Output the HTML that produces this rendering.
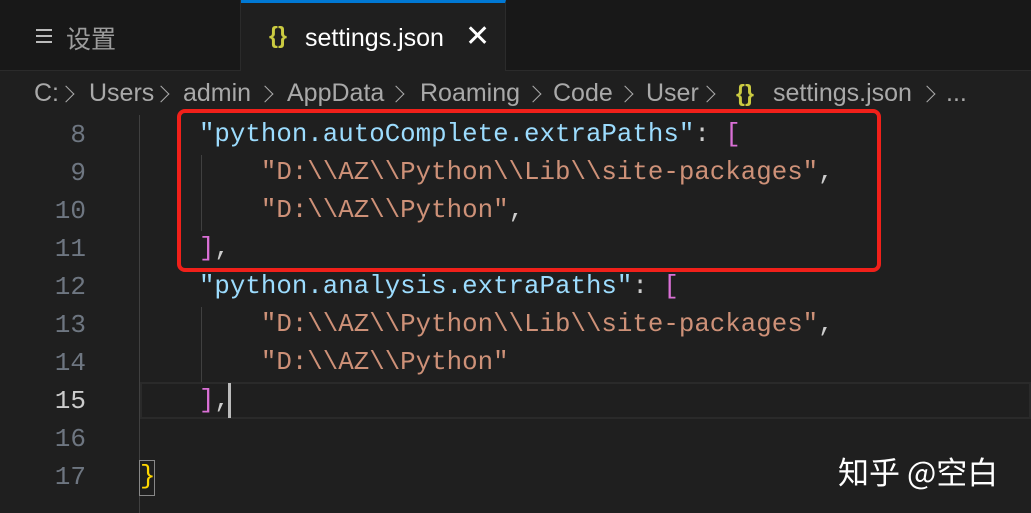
<!DOCTYPE html>
<html><head><meta charset="utf-8"><style>
*{margin:0;padding:0;box-sizing:border-box}
body{width:1031px;height:513px;background:#1f1f1f;overflow:hidden;position:relative;font-family:"Liberation Sans","Noto Sans CJK SC",sans-serif}
.tabs{position:absolute;left:0;top:0;width:1031px;height:71px;background:#181818;border-bottom:1px solid #2b2b2b}
.tab1{position:absolute;left:0;top:0;width:241px;height:70px;border-right:1px solid #2b2b2b;color:#9d9d9d;font-size:25px}
.tab2{position:absolute;left:241px;top:0;width:265px;height:71px;background:#1f1f1f;border-top:3px solid #0078d4;border-right:1px solid #2b2b2b;color:#fff;font-size:25px}
.cw{position:absolute;top:79px;color:#a9a9a9;font-size:25px;white-space:nowrap}
.ch{position:absolute;top:88px;width:12px;height:12px;border-top:1.5px solid #a9a9a9;border-right:1.5px solid #a9a9a9;transform:rotate(45deg)}
.ln{position:absolute;left:0;width:86px;text-align:right;color:#6e7681;font-family:"Liberation Mono",monospace;font-size:26px}
.code{position:absolute;left:137px;font-family:"Liberation Mono",monospace;font-size:25.8px;white-space:pre;color:#ccc}
.k{color:#9cdcfe}.s{color:#ce9178}.p{color:#da70d6}.y{color:#ffd700}
</style></head><body>
<div class="tabs">
 <div class="tab1"><span style="position:absolute;left:36px;top:29px;width:16px;height:2px;background:#bbb;box-shadow:0 6px 0 #bbb,0 12px 0 #bbb"></span><span style="position:absolute;left:66px;top:20px">设置</span></div>
 <div class="tab2"><span style="position:absolute;left:28px;top:19px;color:#cbcb41;font-weight:bold;font-size:23px">{}</span><span style="position:absolute;left:64px;top:21px">settings.json</span><span style="position:absolute;left:224px;top:16px;font-size:30px">✕</span></div>
</div>
<span class="cw" style="left:34px">C:</span><span class="ch" style="left:60px"></span>
<span class="cw" style="left:89px">Users</span><span class="ch" style="left:155px"></span>
<span class="cw" style="left:183px">admin</span><span class="ch" style="left:259px"></span>
<span class="cw" style="left:287px">AppData</span><span class="ch" style="left:390px"></span>
<span class="cw" style="left:420px">Roaming</span><span class="ch" style="left:527px"></span>
<span class="cw" style="left:553px">Code</span><span class="ch" style="left:619px"></span>
<span class="cw" style="left:646px">User</span><span class="ch" style="left:701px"></span>
<span class="cw" style="left:736px;color:#cbcb41;font-weight:bold;font-size:23px;top:80px">{}</span>
<span class="cw" style="left:773px">settings.json</span><span class="ch" style="left:921px"></span>
<span class="cw" style="left:946px">...</span>
<div style="position:absolute;left:139px;top:115px;width:1px;height:398px;background:#404040"></div>
<div style="position:absolute;left:201px;top:155px;width:1px;height:76px;background:#404040"></div>
<div style="position:absolute;left:201px;top:307px;width:1px;height:76px;background:#404040"></div>
<div style="position:absolute;left:140px;top:382px;width:891px;height:37px;border:2px solid #2a2a2a"></div>
<div style="position:absolute;left:228px;top:383px;width:3px;height:35px;background:#bbb"></div>
<div style="position:absolute;left:139px;top:460px;width:16px;height:36px;border:1px solid #888"></div>
<div class="ln" style="top:120px">8</div><div class="ln" style="top:158px">9</div><div class="ln" style="top:196px">10</div><div class="ln" style="top:234px">11</div><div class="ln" style="top:272px">12</div><div class="ln" style="top:310px">13</div><div class="ln" style="top:348px">14</div><div class="ln" style="top:386px;color:#ccc">15</div><div class="ln" style="top:424px">16</div><div class="ln" style="top:462px">17</div>
<div class="code" style="top:120px">    <span class="k">"python.autoComplete.extraPaths"</span>: <span class="p">[</span></div>
<div class="code" style="top:158px">        <span class="s">"D:\\AZ\\Python\\Lib\\site-packages"</span>,</div>
<div class="code" style="top:196px">        <span class="s">"D:\\AZ\\Python"</span>,</div>
<div class="code" style="top:234px">    <span class="p">]</span>,</div>
<div class="code" style="top:272px">    <span class="k">"python.analysis.extraPaths"</span>: <span class="p">[</span></div>
<div class="code" style="top:310px">        <span class="s">"D:\\AZ\\Python\\Lib\\site-packages"</span>,</div>
<div class="code" style="top:348px">        <span class="s">"D:\\AZ\\Python"</span></div>
<div class="code" style="top:386px">    <span class="p">]</span>,</div>
<div class="code" style="top:462px;left:140px"><span class="y">}</span></div>
<div style="position:absolute;left:177px;top:109px;width:704px;height:163px;border:4px solid #f0201a;border-radius:8px"></div>
<div style="position:absolute;left:838px;top:448px;color:#fff;font-size:31px;font-family:'Noto Sans CJK SC',sans-serif">知乎 @空白</div>
</body></html>
